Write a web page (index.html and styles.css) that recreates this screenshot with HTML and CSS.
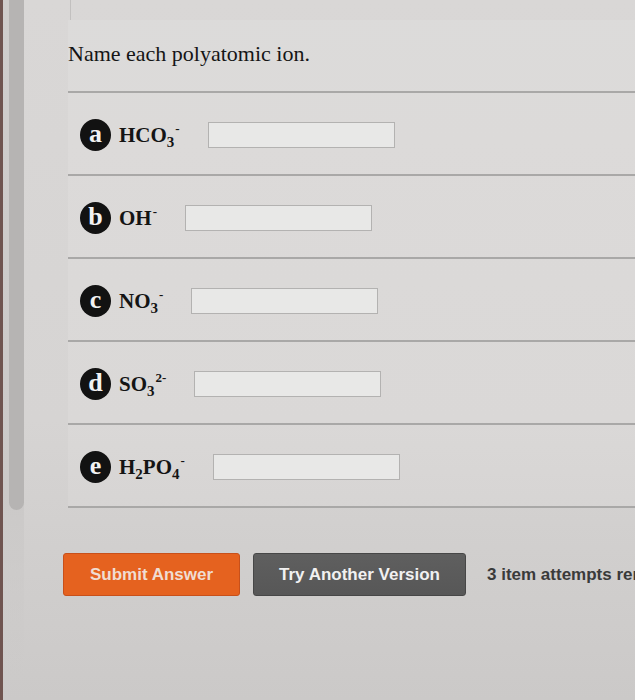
FILE: index.html
```html
<!DOCTYPE html>
<html lang="en">
<head>
<meta charset="utf-8">
<title>Name each polyatomic ion</title>
<link rel="stylesheet" href="styles.css">
</head>
<body>
<div class="screen">
  <div class="bezel"></div>
  <div class="track"><div class="thumb"></div></div>
  <main class="page">
    <div class="prev"></div>
    <section class="question">
      <div class="prompt">Name each polyatomic ion.</div>
      <div class="part">
        <span class="badge">a</span>
        <span class="formula">HCO<sub>3</sub><sup>-</sup></span>
        <input class="answer" type="text">
      </div>
      <div class="part">
        <span class="badge">b</span>
        <span class="formula">OH<sup>-</sup></span>
        <input class="answer" type="text">
      </div>
      <div class="part">
        <span class="badge">c</span>
        <span class="formula">NO<sub>3</sub><sup>-</sup></span>
        <input class="answer" type="text">
      </div>
      <div class="part">
        <span class="badge">d</span>
        <span class="formula">SO<sub>3</sub><sup>2-</sup></span>
        <input class="answer" type="text">
      </div>
      <div class="part">
        <span class="badge">e</span>
        <span class="formula">H<sub>2</sub>PO<sub>4</sub><sup>-</sup></span>
        <input class="answer" type="text">
      </div>
    </section>
    <div class="actions">
      <button class="btn btn-submit" type="button">Submit Answer</button>
      <button class="btn btn-try" type="button">Try Another Version</button>
      <span class="attempts">3 item attempts remaining</span>
    </div>
  </main>
</div>
</body>
</html>
```

FILE: styles.css
```css
html, body {
  margin: 0;
  padding: 0;
  height: 100%;
  overflow: hidden;
}

body {
  background: linear-gradient(#d9d7d6, #d6d4d3 60%, #cbc9c8);
  font-family: "Liberation Serif", "Times New Roman", serif;
  color: #111;
}

.screen {
  display: flex;
  height: 700px;
}

.bezel {
  width: 3px;
  flex-shrink: 0;
  background: #6f5450;
}

.track {
  width: 21px;
  flex-shrink: 0;
  padding-left: 6px;
  box-sizing: border-box;
  background: linear-gradient(#cfcdcc, #cbc9c8 70%, rgba(0, 0, 0, 0));
}

.thumb {
  width: 15px;
  height: 510px;
  background: #b6b4b3;
  border-radius: 0 0 8px 8px;
}

.page {
  flex: 1;
  min-width: 0;
  padding-left: 44px;
  overflow: hidden;
}

.prev {
  height: 20px;
  margin-left: 2px;
  border-left: 1px solid #c2c0bf;
}

.question {
  background: rgba(255, 255, 255, 0.1);
}

.prompt {
  font-size: 22px;
  line-height: 28px;
  padding: 20px 0 23px;
  border-bottom: 2px solid #a9a8a7;
  color: #151515;
}

.part {
  display: flex;
  align-items: center;
  height: 32px;
  padding: 26px 0 23px 12px;
  border-bottom: 2px solid #a9a8a7;
}

.badge {
  width: 31px;
  height: 32px;
  border-radius: 50%;
  background: #121212;
  color: #f2f2f2;
  font-weight: bold;
  font-size: 26px;
  line-height: 29px;
  text-align: center;
  flex-shrink: 0;
}

.formula {
  margin-left: 8px;
  font-weight: bold;
  font-size: 21px;
  line-height: 32px;
  color: #141414;
  white-space: nowrap;
}

.formula sub {
  font-size: 15px;
  vertical-align: -5px;
  line-height: 0;
}

.formula sup {
  font-size: 13px;
  vertical-align: 9px;
  line-height: 0;
  margin-left: 1px;
}

.answer {
  margin-left: 28px;
  width: 187px;
  height: 26px;
  box-sizing: border-box;
  border: 1px solid #b3b2b1;
  background: #e8e8e7;
  padding: 0 4px;
}

.actions {
  display: flex;
  align-items: center;
  margin: 45px 0 0 -5px;
  white-space: nowrap;
}

.btn {
  height: 43px;
  border-radius: 3px;
  font-family: "Liberation Sans", Arial, sans-serif;
  font-weight: bold;
  font-size: 17px;
  padding: 0;
  flex-shrink: 0;
}

.btn-submit {
  width: 177px;
  background: #e5621f;
  border: 1px solid #c8501a;
  color: #f0ddd2;
}

.btn-try {
  width: 213px;
  margin-left: 13px;
  background: linear-gradient(#5f5f5f, #575757);
  border: 1px solid #474747;
  color: #f1f1f1;
}

.attempts {
  margin-left: 21px;
  font-family: "Liberation Sans", Arial, sans-serif;
  font-weight: bold;
  font-size: 17px;
  color: #3a3a3a;
  flex-shrink: 0;
}
```
